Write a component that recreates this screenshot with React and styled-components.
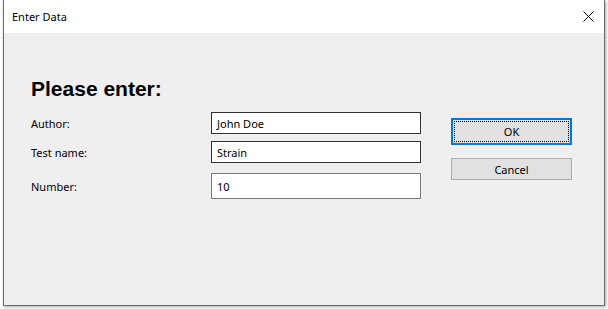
import React from 'react';
import styled, { createGlobalStyle } from 'styled-components';

const GlobalStyle = createGlobalStyle`
  html, body {
    margin: 0;
    padding: 0;
    background: #ffffff;
    width: 608px;
    height: 309px;
    overflow: hidden;
  }
`;

const Window = styled.div`
  margin-left: 3px;
  width: 600px;
  height: 305px;
  border: 1px solid #6b6b6b;
  border-top: none;
  background: #efefef;
  box-shadow: 1px 1px 3px rgba(0, 0, 0, 0.35);
  display: flex;
  flex-direction: column;
  font-family: "Noto Sans", "Liberation Sans", sans-serif;
  font-size: 11px;
  color: #000;
`;

const TitleBar = styled.div`
  height: 33px;
  background: #ffffff;
  display: flex;
  align-items: center;
  justify-content: space-between;
  padding: 0 0 0 8px;
`;

const Title = styled.span`
  font-size: 11px;
  margin-top: -1px;
`;

const CloseButton = styled.div`
  width: 30px;
  height: 33px;
  display: flex;
  align-items: center;
  justify-content: center;
  margin-right: 1px;
`;

const Body = styled.div`
  display: flex;
  padding: 44px 0 0 27px;
  gap: 30px;
`;

const Form = styled.div`
  width: 390px;
  display: flex;
  flex-direction: column;
`;

const Heading = styled.h1`
  margin: 0;
  font-family: "Liberation Sans", Arial, sans-serif;
  font-size: 21px;
  line-height: 24px;
  font-weight: bold;
`;

const Row = styled.div`
  display: grid;
  grid-template-columns: 180px 210px;
  align-items: center;
  margin-top: ${p => p.$top}px;
`;

const Label = styled.span`
  font-size: 11px;
`;

const Field = styled.div`
  box-sizing: border-box;
  height: ${p => p.$h}px;
  border: 1px solid ${p => p.$soft ? '#7a7a7a' : '#333333'};
  background: #ffffff;
  display: flex;
  align-items: center;
  padding-left: 5px;
  font-size: 11px;
`;

const Buttons = styled.div`
  width: 121px;
  display: flex;
  flex-direction: column;
  gap: 13px;
  margin-top: 41px;
`;

const Button = styled.div`
  box-sizing: border-box;
  height: ${p => p.$h}px;
  background: #e1e1e1;
  border: ${p => p.$default ? '2px solid #0078d7' : '1px solid #adadad'};
  outline: ${p => p.$default ? '1px dotted #000' : 'none'};
  outline-offset: -4px;
  display: flex;
  align-items: center;
  justify-content: center;
  font-size: 11px;
`;

export default function App() {
  return (
    <>
      <GlobalStyle />
      <Window>
        <TitleBar>
          <Title>Enter Data</Title>
          <CloseButton>
            <svg width="11" height="11" viewBox="0 0 11 11">
              <path d="M0.5 0.5 L10.5 10.5 M10.5 0.5 L0.5 10.5" stroke="#000" strokeWidth="1" fill="none" />
            </svg>
          </CloseButton>
        </TitleBar>
        <Body>
          <Form>
            <Heading>Please enter:</Heading>
            <Row $top={11}>
              <Label>Author:</Label>
              <Field $h={22}>John Doe</Field>
            </Row>
            <Row $top={7}>
              <Label>Test name:</Label>
              <Field $h={22}>Strain</Field>
            </Row>
            <Row $top={10}>
              <Label>Number:</Label>
              <Field $h={26} $soft>10</Field>
            </Row>
          </Form>
          <Buttons>
            <Button $h={27} $default>OK</Button>
            <Button $h={22}>Cancel</Button>
          </Buttons>
        </Body>
      </Window>
    </>
  );
}
